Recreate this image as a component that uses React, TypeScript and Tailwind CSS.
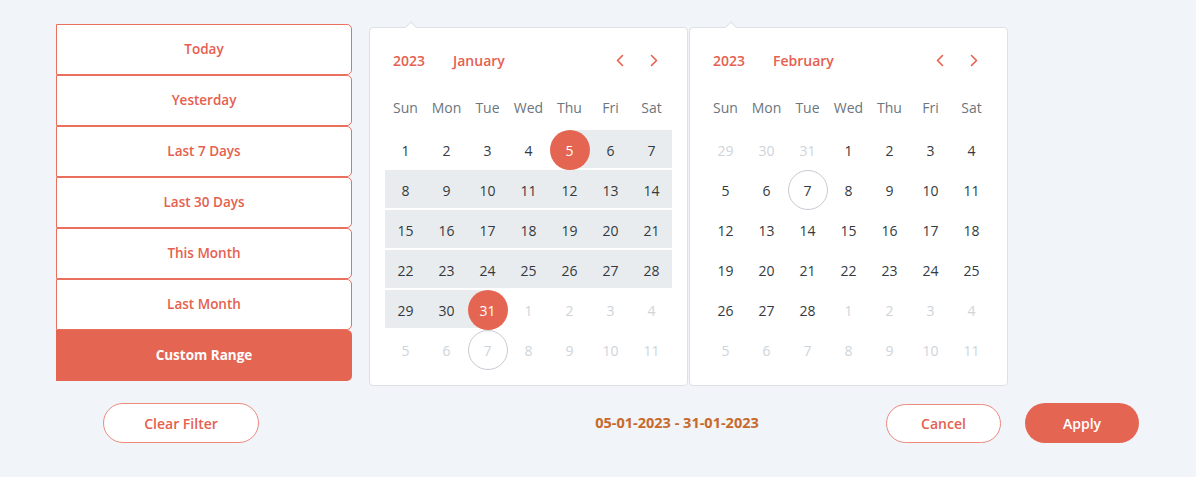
import React from "react";

type Day = { d: number; out?: boolean; start?: boolean; end?: boolean; inRange?: boolean; today?: boolean };

const FONT = { fontFamily: '"Open Sans", "Noto Sans", sans-serif' };

function buildJan(): Day[] {
  const days: Day[] = [];
  for (let i = 1; i <= 31; i++) {
    days.push({ d: i, start: i === 5, end: i === 31, inRange: i > 5 && i < 31 });
  }
  for (let i = 1; i <= 11; i++) days.push({ d: i, out: true, today: i === 7 });
  return days;
}

function buildFeb(): Day[] {
  const days: Day[] = [];
  [29, 30, 31].forEach((d) => days.push({ d, out: true }));
  for (let i = 1; i <= 28; i++) days.push({ d: i, today: i === 7 });
  for (let i = 1; i <= 11; i++) days.push({ d: i, out: true });
  return days;
}

const Chevron = ({ dir }: { dir: "l" | "r" }) => (
  <svg width="8" height="13" viewBox="0 0 8 13" fill="none">
    <path
      d={dir === "l" ? "M6.5 1.5 L1.5 6.5 L6.5 11.5" : "M1.5 1.5 L6.5 6.5 L1.5 11.5"}
      stroke="#e5604f"
      strokeWidth="1.6"
      strokeLinecap="round"
      strokeLinejoin="round"
    />
  </svg>
);

function Cell({ day }: { day: Day }) {
  const textColor = day.start || day.end ? "text-white" : day.out ? "text-[#ced4da]" : "text-[#343a40]";
  return (
    <div className="relative h-10 flex items-center justify-center">
      {day.inRange && <div className="absolute left-0 right-0 top-0 h-[38px] bg-[#e9ecef]" />}
      {day.start && <div className="absolute left-1/2 right-0 top-0 h-[38px] bg-[#e9ecef]" />}
      {day.end && <div className="absolute left-0 right-1/2 top-0 h-[38px] bg-[#e9ecef]" />}
      {(day.start || day.end) && (
        <div className="absolute left-1/2 top-0 -ml-5 w-10 h-10 rounded-full bg-[#e56553]" />
      )}
      {day.today && (
        <div className="absolute left-1/2 top-0 -ml-5 w-10 h-10 rounded-full border border-[#c6cbd0]" />
      )}
      <span className={`relative text-[14px] ${textColor}`}>{day.d}</span>
    </div>
  );
}

function Calendar({ month, days }: { month: string; days: Day[] }) {
  const names = ["Sun", "Mon", "Tue", "Wed", "Thu", "Fri", "Sat"];
  return (
    <div className="relative w-[319px] h-[359px] bg-white border border-[#dde1e6] rounded-[4px]">
      <div className="absolute -top-[5px] left-[37px] w-[8px] h-[8px] rotate-45 bg-white border-l border-t border-[#dde1e6]" />
      <div className="relative mt-[20px] h-6 flex items-center pl-[23px] pr-[29px]">
        <span className="text-[14px] font-semibold text-[#e5604f]">2023</span>
        <span className="ml-[28px] text-[14px] font-semibold text-[#e5604f]">{month}</span>
        <div className="ml-auto flex items-center gap-[26px]">
          <Chevron dir="l" />
          <Chevron dir="r" />
        </div>
      </div>
      <div className="px-[15px]">
        <div className="mt-[15px] grid grid-cols-7 h-10 items-center">
          {names.map((n) => (
            <div key={n} className="text-center text-[14px] text-[#6c757d]">
              {n}
            </div>
          ))}
        </div>
        <div className="mt-[3px] grid grid-cols-7">
          {days.map((d, i) => (
            <Cell key={i} day={d} />
          ))}
        </div>
      </div>
    </div>
  );
}

export default function App() {
  const ranges = ["Today", "Yesterday", "Last 7 Days", "Last 30 Days", "This Month", "Last Month"];
  return (
    <div className="min-h-screen w-full bg-[#f1f4f8]" style={FONT}>
      <div className="flex pt-[24px] pl-[56px]">
        <div className="w-[296px] flex flex-col">
          {ranges.map((r) => (
            <div
              key={r}
              className="h-[51px] flex items-center justify-center bg-white border border-[#e9705f] rounded-r-[5px] text-[13.5px] font-semibold text-[#e5604f]"
            >
              {r}
            </div>
          ))}
          <div className="h-[51px] flex items-center justify-center bg-[#e56553] rounded-r-[5px] text-[13.5px] font-bold text-white">
            Custom Range
          </div>
        </div>
        <div className="ml-[17px] mt-[3px] flex gap-px">
          <Calendar month="January" days={buildJan()} />
          <Calendar month="February" days={buildFeb()} />
        </div>
      </div>
      <div className="flex items-center mt-[17px] pl-[103px]">
        <button className="w-[156px] h-10 rounded-full bg-white border border-[#ec8a7c] text-[14px] font-semibold text-[#e5604f]">
          Clear Filter
        </button>
        <div className="ml-[218px] w-[400px] text-center text-[14.5px] font-bold text-[#c8692b]">
          05-01-2023 - 31-01-2023
        </div>
        <button className="ml-[9px] w-[115px] h-[39px] rounded-full bg-white border border-[#ec8a7c] text-[14px] font-semibold text-[#e5604f]">
          Cancel
        </button>
        <button className="ml-[24px] w-[114px] h-10 rounded-full bg-[#e56553] text-[14px] font-semibold text-white">
          Apply
        </button>
      </div>
    </div>
  );
}
